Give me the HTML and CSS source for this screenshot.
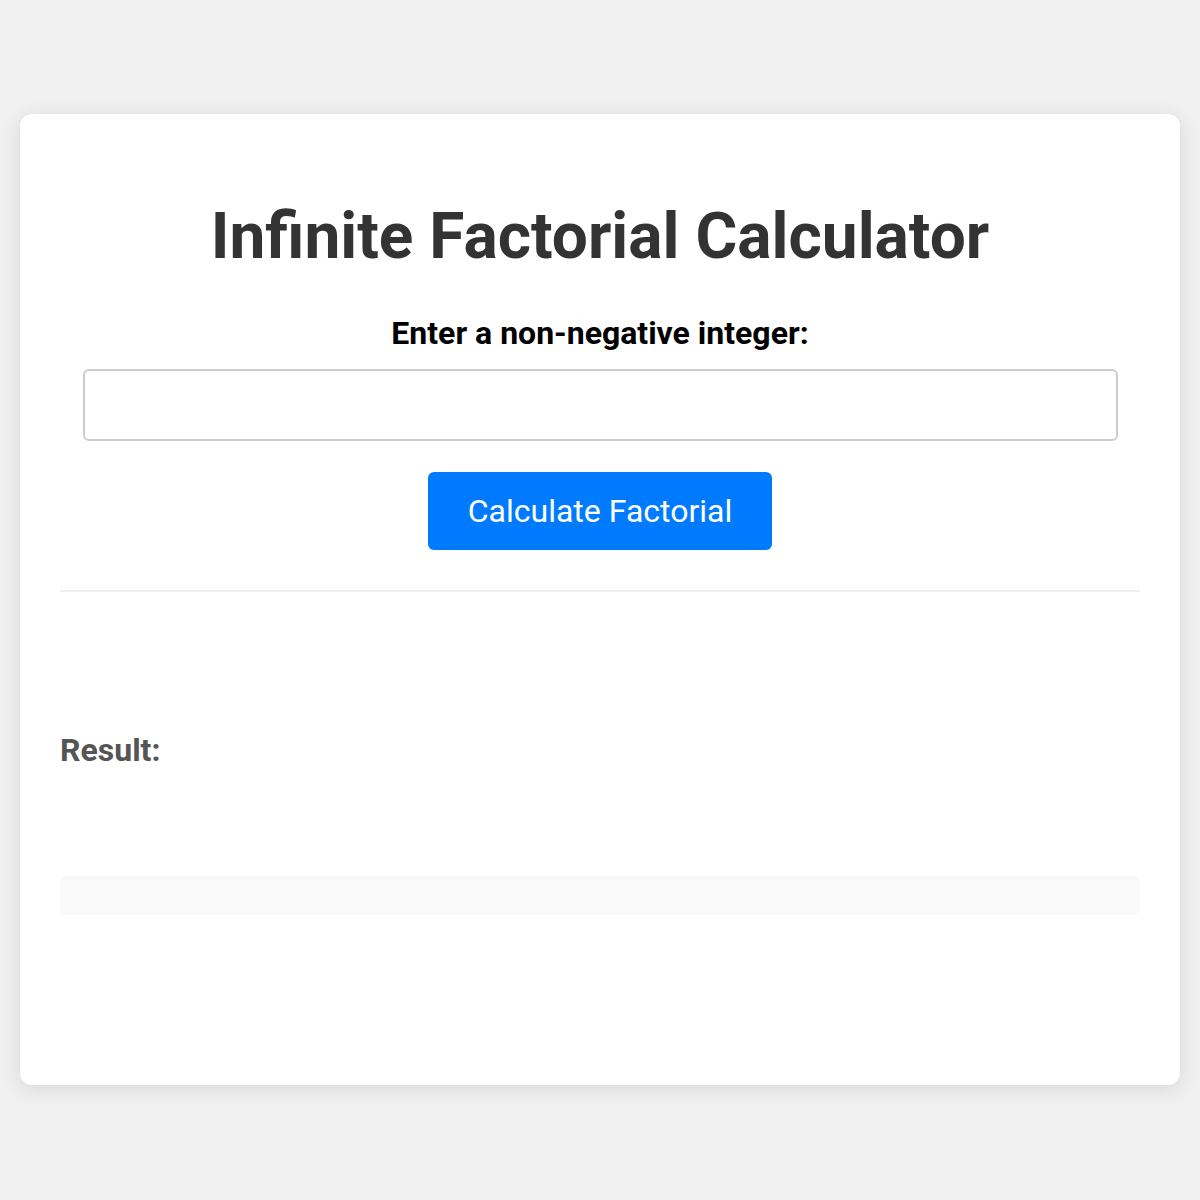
FILE: index.html
```html
<!DOCTYPE html>
<html>
<head>
<meta charset="utf-8">
<link rel="stylesheet" href="styles.css">
</head>
<body>
<div class="card">
  <h1 class="title">Infinite Factorial Calculator</h1>
  <label class="label" for="num">Enter a non-negative integer:</label>
  <input class="input" id="num" type="text">
  <button class="btn">Calculate Factorial</button>
  <hr class="divider">
  <div class="result-section">
    <h3 class="result-title">Result:</h3>
    <div class="result-box"></div>
  </div>
</div>
</body>
</html>
```
FILE: styles.css
```css
html, body {
  margin: 0;
  padding: 0;
}
body {
  background: #f0f0f0;
  font-family: Roboto, "Liberation Sans", sans-serif;
  padding: 114px 20px 0;
  height: 1200px;
  box-sizing: border-box;
}
.card {
  background: #fff;
  border-radius: 12px;
  box-shadow: 0 4px 20px rgba(0,0,0,0.1);
  padding: 0 40px;
  height: 971px;
  box-sizing: border-box;
  display: flex;
  flex-direction: column;
  align-items: center;
}
.title {
  margin: 88px 0 0;
  font-size: 64px;
  line-height: 70px;
  font-weight: 700;
  color: #333;
  text-align: center;
}
.label {
  margin-top: 42px;
  font-size: 32px;
  line-height: 38px;
  font-weight: 700;
  color: #000;
}
.input {
  margin-top: 17px;
  width: 1035px;
  height: 72px;
  box-sizing: border-box;
  border: 2px solid #ccc;
  border-radius: 6px;
  font-size: 30px;
  padding: 0 15px;
  font-family: inherit;
}
.btn {
  margin-top: 31px;
  width: 344px;
  height: 78px;
  background: #007bff;
  color: #fff;
  border: none;
  border-radius: 6px;
  font-family: inherit;
  font-size: 32px;
  font-weight: 400;
}
.divider {
  align-self: stretch;
  margin: 40px 0 0;
  border: none;
  border-top: 2px solid #eee;
}
.result-section {
  align-self: stretch;
}
.result-title {
  margin: 139px 0 0;
  font-size: 32px;
  line-height: 38px;
  font-weight: 700;
  color: #555;
}
.result-box {
  margin-top: 107px;
  height: 39px;
  background: #f9f9f9;
  border-radius: 6px;
}
```
